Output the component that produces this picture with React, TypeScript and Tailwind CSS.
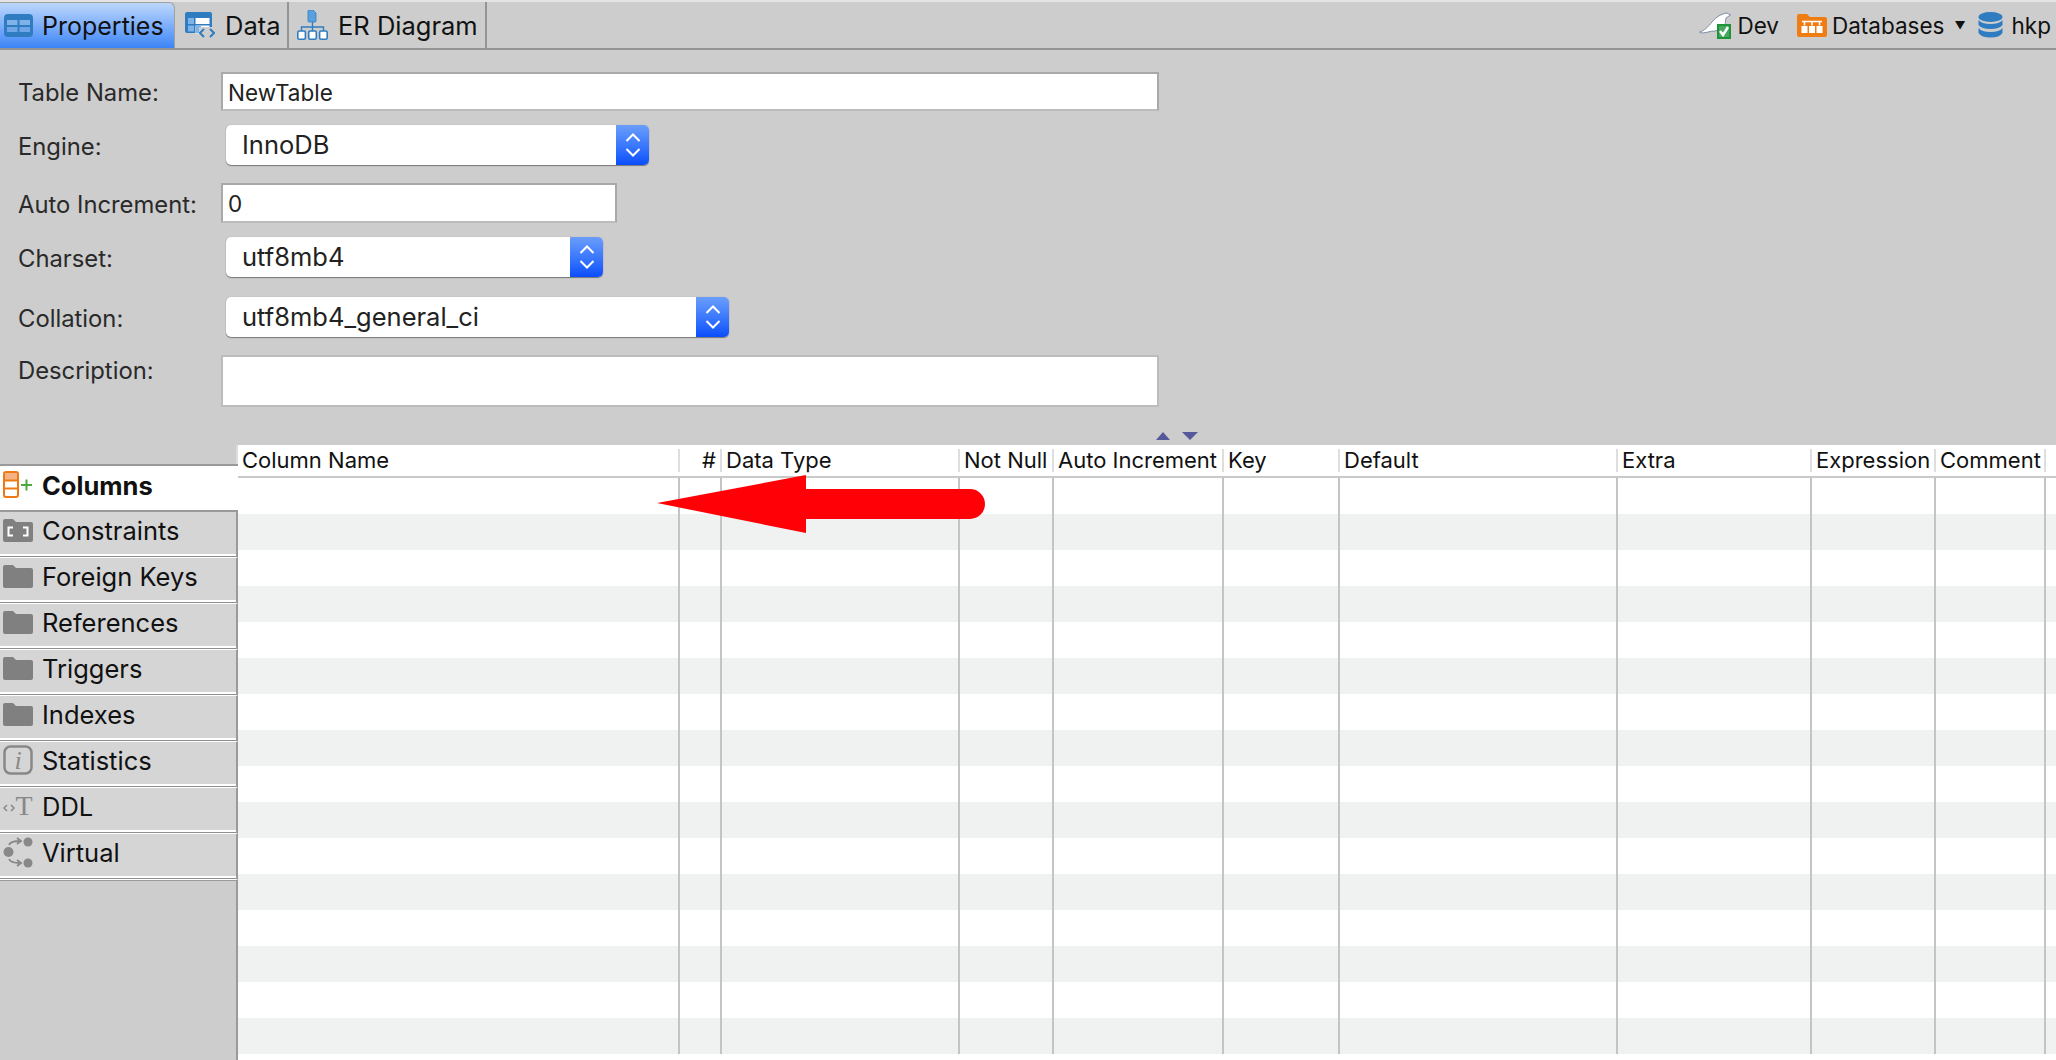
const font = "font-['Inter','Liberation_Sans',sans-serif]"

function PropertiesIcon() {
  return (
    <svg width="29" height="23" viewBox="0 0 29 23">
      <rect x="0" y="0" width="29" height="23" rx="4" fill="#2f7dc0" />
      <rect x="3" y="6" width="10.500" height="5" fill="#7fb2e6" />
      <rect x="15.500" y="6" width="10.500" height="5" fill="#7fb2e6" />
      <rect x="3" y="13" width="10.500" height="5" fill="#6fa6e8" />
      <rect x="15.500" y="13" width="10.500" height="5" fill="#6fa6e8" />
    </svg>
  )
}

function DataIcon() {
  return (
    <svg width="30" height="26" viewBox="0 0 30 26">
      <rect x="0" y="0" width="27" height="21" rx="2" fill="#2f7dc0" />
      <rect x="3" y="6" width="6" height="6" fill="#7fb2e6" />
      <rect x="3" y="13.500" width="6" height="6" fill="#7fb2e6" />
      <rect x="10.500" y="6" width="14" height="6" fill="#fff" />
      <rect x="10.500" y="13.500" width="14" height="8" fill="#fff" />
      <path d="M11 21V13.500h5V21z" fill="#7fb2e6" />
      <path d="M14 15h16v11H14z" fill="#cdcdcd" />
      <path d="M19 17l-4 4 4 4M25 17l4 4-4 4" fill="none" stroke="#2f7dc0" strokeWidth="2" />
    </svg>
  )
}

function ErIcon() {
  return (
    <svg width="31" height="30" viewBox="0 0 31 30">
      <path d="M11 1a1 1 0 011-1h4l3 3v8a1 1 0 01-1 1h-6a1 1 0 01-1-1z" fill="#5aa0de" stroke="#2f7dc0" strokeWidth="0.800" />
      <path d="M15.500 12v10M4.500 21v-4h22v4" fill="none" stroke="#2f7dc0" strokeWidth="1.400" />
      <rect x="0.800" y="21" width="7.600" height="8.200" rx="1.500" fill="#fff" stroke="#2f7dc0" strokeWidth="1.600" />
      <rect x="11.700" y="21" width="7.600" height="8.200" rx="1.500" fill="#fff" stroke="#2f7dc0" strokeWidth="1.600" />
      <rect x="22.600" y="21" width="7.600" height="8.200" rx="1.500" fill="#fff" stroke="#2f7dc0" strokeWidth="1.600" />
    </svg>
  )
}

function DevIcon() {
  return (
    <svg width="32" height="27" viewBox="0 0 32 27">
      <path d="M0.500 20C5 19 9 15 13 10C17 5 22 2 28 1L31.500 3L27 6C26 10 27 14 24 17L16 19C11 19 7 21 3 21Z" fill="#fff" stroke="#7f8ea6" strokeWidth="1" />
      <rect x="18" y="12" width="14" height="15" fill="#1f9437" />
      <rect x="20" y="14" width="10" height="11" fill="#46a860" />
      <path d="M21 19l3 4 5-8" fill="none" stroke="#fff" strokeWidth="2.500" />
    </svg>
  )
}

function DatabasesIcon() {
  return (
    <svg width="30" height="23" viewBox="0 0 30 23">
      <path d="M0 2a2 2 0 012-2h8l3 3h15a2 2 0 012 2v16a2 2 0 01-2 2H2a2 2 0 01-2-2z" fill="#ef7d14" />
      <path d="M5 7.500h20M7.500 7.500v4M15 7.500v4M22.500 7.500v4" fill="none" stroke="#fff" strokeWidth="1.500" />
      <rect x="4.500" y="12" width="6" height="7" fill="#fff" />
      <rect x="12" y="12" width="6" height="7" fill="#fff" />
      <rect x="19.500" y="12" width="6" height="7" fill="#fff" />
    </svg>
  )
}

function HkpIcon() {
  return (
    <svg width="25" height="26" viewBox="0 0 25 26">
      <ellipse cx="12.500" cy="5" rx="12" ry="5" fill="#2f7dc0" />
      <path d="M0.500 8c2 2.500 6 4 12 4s10-1.500 12-4v5c-2 2.500-6 4-12 4s-10-1.500-12-4z" fill="#2f7dc0" />
      <path d="M0.500 16c2 2.500 6 4 12 4s10-1.500 12-4v5c-2 3-6 4.500-12 4.500S2.500 24 0.500 21z" fill="#2f7dc0" />
    </svg>
  )
}

function ColumnsIcon() {
  return (
    <svg width="30" height="27" viewBox="0 0 30 27">
      <rect x="1" y="1" width="14" height="25" rx="2" fill="#fff" stroke="#ee7a16" strokeWidth="2" />
      <rect x="2" y="2" width="12" height="7" fill="#f5b285" />
      <path d="M1 9.500h14M1 17.500h14" stroke="#ee7a16" strokeWidth="2" />
      <path d="M18 14h11M23.500 8.500v11" stroke="#4aa83e" strokeWidth="2" />
    </svg>
  )
}

function FolderIcon({ brackets }: { brackets?: boolean }) {
  return (
    <svg width="30" height="23" viewBox="0 0 30 23">
      <path d="M0 2a2 2 0 012-2h8l3 3h15a2 2 0 012 2v16a2 2 0 01-2 2H2a2 2 0 01-2-2z" fill="#808080" />
      {brackets && <path d="M10 8.500H5.500v8H10M20 8.500h4.500v8H20" fill="none" stroke="#fff" strokeWidth="2" />}
    </svg>
  )
}

function InfoIcon() {
  return (
    <svg width="30" height="30" viewBox="0 0 30 30">
      <rect x="1.500" y="1.500" width="27" height="27" rx="6" fill="none" stroke="#888" strokeWidth="2.500" />
      <text x="15" y="24" textAnchor="middle" fontFamily="Liberation Serif, serif" fontStyle="italic" fontSize="26" fill="#888">i</text>
    </svg>
  )
}

function DdlIcon() {
  return (
    <svg width="30" height="30" viewBox="0 0 30 30">
      <path d="M4 14l-3 3 3 3M8 14l3 3-3 3" fill="none" stroke="#888" strokeWidth="1.500" />
      <text x="21" y="24" textAnchor="middle" fontFamily="Liberation Serif, serif" fontSize="28" fill="#888">T</text>
    </svg>
  )
}

function VirtualIcon() {
  return (
    <svg width="30" height="31" viewBox="0 0 30 31">
      <circle cx="25" cy="5" r="4.500" fill="#888" />
      <circle cx="5.500" cy="15" r="5" fill="#888" />
      <circle cx="25" cy="26" r="4.500" fill="#888" />
      <path d="M6 8c1-3 4-4 11-4M14 1l4 3-4 3M6 22c1 3 4 4 11 4M14 23l4 3-4 3" fill="none" stroke="#888" strokeWidth="1.800" />
    </svg>
  )
}

function Updown() {
  return (
    <div className="w-[33px] shrink-0 rounded-r-[5px] bg-gradient-to-b from-[#6a9dfb] to-[#0a4dfb] flex items-center justify-center">
      <svg width="16" height="26" viewBox="0 0 16 26">
        <path d="M1.500 9L8 2.500 14.500 9M1.500 17L8 23.500 14.500 17" fill="none" stroke="#fff" strokeWidth="2" />
      </svg>
    </div>
  )
}

function Select({ value, width }: { value: string; width: string }) {
  return (
    <div className={`${width} h-10 ml-[5px] flex rounded-[5px] bg-white shadow-[0_1px_1px_rgba(0,0,0,0.4),0_0_1px_rgba(0,0,0,0.3)]`}>
      <div className="flex-1 pl-4 flex items-center text-[25.5px] text-[#222]">{value}</div>
      <Updown />
    </div>
  )
}

function Label({ children }: { children: string }) {
  return <div className="w-[221px] pl-[18px] pt-0.5 shrink-0 text-[23.8px] leading-[31px] text-[#2a2a2a]">{children}</div>
}

function Input({ value, size }: { value: string; size: string }) {
  return (
    <div className={`${size} border-2 border-[#a9a9a9] border-b-[#bcbcbc] bg-white pl-[5px] pt-0.5 flex items-center text-[22.5px] text-[#222]`}>
      {value}
    </div>
  )
}

const tabs = [
  { name: 'Constraints', icon: <FolderIcon brackets /> },
  { name: 'Foreign Keys', icon: <FolderIcon /> },
  { name: 'References', icon: <FolderIcon /> },
  { name: 'Triggers', icon: <FolderIcon /> },
  { name: 'Indexes', icon: <FolderIcon /> },
  { name: 'Statistics', icon: <InfoIcon /> },
  { name: 'DDL', icon: <DdlIcon /> },
  { name: 'Virtual', icon: <VirtualIcon /> },
]

const columns = [
  { name: 'Column Name', w: 'w-[442px]', right: false },
  { name: '#', w: 'w-[42px]', right: true },
  { name: 'Data Type', w: 'w-[238px]', right: false },
  { name: 'Not Null', w: 'w-[94px]', right: false },
  { name: 'Auto Increment', w: 'w-[170px]', right: false },
  { name: 'Key', w: 'w-[116px]', right: false },
  { name: 'Default', w: 'w-[278px]', right: false },
  { name: 'Extra', w: 'w-[194px]', right: false },
  { name: 'Expression', w: 'w-[124px]', right: false },
  { name: 'Comment', w: 'w-[110px]', right: false },
  { name: '', w: 'flex-1', right: false },
]

export default function App() {
  return (
    <div className={`relative h-screen overflow-hidden bg-[#cdcdcd] flex flex-col ${font}`}>
      <div className="h-[50px] shrink-0 border-t-2 border-t-[#e4e4e4] border-b-2 border-b-[#949494] flex items-stretch text-[25.5px] text-[#111]">
        <div className="w-[175px] flex items-center gap-[9px] pl-1 rounded-tr-md border-t border-r border-[#a0a0a0] bg-gradient-to-b from-[#bdd7fb] to-[#3b84f6]">
          <PropertiesIcon />
          <span className="pt-0.5 text-[25px]">Properties</span>
        </div>
        <div className="w-[114px] flex items-center gap-[10px] pl-[10px] border-r-2 border-[#949494]">
          <DataIcon />
          <span className="pt-0.5">Data</span>
        </div>
        <div className="w-[198px] flex items-center gap-[10px] pl-2 border-r-2 border-[#949494]">
          <ErIcon />
          <span className="pt-0.5">ER Diagram</span>
        </div>
        <div className="flex-1 flex items-center justify-end pr-[5px] text-[22.5px]">
          <DevIcon />
          <span className="ml-[6px] pt-0.5">Dev</span>
          <span className="ml-[18px]"><DatabasesIcon /></span>
          <span className="ml-[5px] pt-0.5">Databases</span>
          <span className="ml-[10px] text-[11px]">▼</span>
          <span className="ml-[12px]"><HkpIcon /></span>
          <span className="ml-[9px] pt-0.5">hkp</span>
        </div>
      </div>

      <div className="h-[395px] shrink-0 relative">
        <div className="h-[22px]" />
        <div className="flex items-center h-[39px]"><Label>Table Name:</Label><Input value="NewTable" size="w-[938px] h-[39px]" /></div>
        <div className="flex items-center h-10 mt-[14px]"><Label>Engine:</Label><Select value="InnoDB" width="w-[423px]" /></div>
        <div className="flex items-center h-10 mt-[18px]"><Label>Auto Increment:</Label><Input value="0" size="w-[396px] h-10" /></div>
        <div className="flex items-center h-10 mt-[14px]"><Label>Charset:</Label><Select value="utf8mb4" width="w-[377px]" /></div>
        <div className="flex items-center h-10 mt-5"><Label>Collation:</Label><Select value="utf8mb4_general_ci" width="w-[503px]" /></div>
        <div className="flex items-start mt-[18px]">
          <div className="-mt-0.5"><Label>Description:</Label></div>
          <div className="w-[938px] h-[52px] border-2 border-[#bcbcbc] bg-white" />
        </div>
        <div className="absolute left-[1156px] top-[382px] flex gap-[12px]">
          <div className="w-0 h-0 border-x-[7px] border-x-transparent border-b-[8px] border-b-[#55589a]" />
          <div className="w-0 h-0 border-x-[8px] border-x-transparent border-t-[8px] border-t-[#55589a]" />
        </div>
      </div>

      <div className="flex-1 flex min-h-0">
        <div className="w-[238px] shrink-0 flex flex-col">
          <div className="h-[19px] shrink-0 border-r-2 border-[#dcdcdc]" />
          <div className="h-[46px] shrink-0 border-t-2 border-[#9a9a9a] bg-white flex items-center gap-[9px] pl-[3px] text-[25.5px] font-bold text-[#111]">
            <span className="pb-2"><ColumnsIcon /></span>
            <span className="pb-1">Columns</span>
          </div>
          <div className="h-0.5 shrink-0 bg-[#9a9a9a]" />
          {tabs.map((t) => (
            <div key={t.name} className="h-[46px] shrink-0 border-b border-white bg-[#8f8f8f] border-r-2 border-r-[#9a9a9a]">
              <div className="h-[44px] border-b-2 border-white bg-[#d5d5d5] flex items-center gap-[9px] pl-[3px] text-[25.5px] text-[#111]">
                <span className="w-[30px] flex justify-center pb-1.5">{t.icon}</span>
                <span className="pb-1">{t.name}</span>
              </div>
            </div>
          ))}
          <div className="flex-1 border-t border-[#9a9a9a] border-r-2 border-r-[#9a9a9a]" />
        </div>

        <div className="flex-1 min-w-0 bg-white flex flex-col">
          <div className="h-[33px] shrink-0 border-b-2 border-[#c9c9c9] flex text-[22px] text-[#111]">
            {columns.map((c) => (
              <div key={c.name || 'end'} className={`${c.w} shrink-0 flex items-center px-1 ${c.right ? 'justify-end' : ''} ${c.name ? 'relative' : ''}`}>
                <span className={`whitespace-nowrap ${c.right ? 'mr-0.5' : ''}`}>{c.name}</span>
                {c.name && <span className="absolute right-0 top-1 bottom-1 w-0.5 bg-[#dedede]" />}
              </div>
            ))}
          </div>
          <div className="flex-1 relative overflow-hidden">
            {Array.from({ length: 16 }).map((_, i) => (
              <div key={i} className={`h-9 flex ${i % 2 === 1 ? 'bg-[#f0f2f1]' : 'bg-white'}`}>
                {columns.map((c) => (
                  <div key={c.name || 'end'} className={`${c.w} shrink-0 ${c.name ? 'border-r-2 border-[#c4c4c4]' : ''}`} />
                ))}
              </div>
            ))}
          </div>
        </div>
      </div>

      <svg className="absolute left-[657px] top-[475px]" width="328" height="58" viewBox="0 0 328 58">
        <path d="M0 28L149 0v14h164a15 15 0 010 30H149v14z" fill="#fe0006" />
      </svg>
    </div>
  )
}
